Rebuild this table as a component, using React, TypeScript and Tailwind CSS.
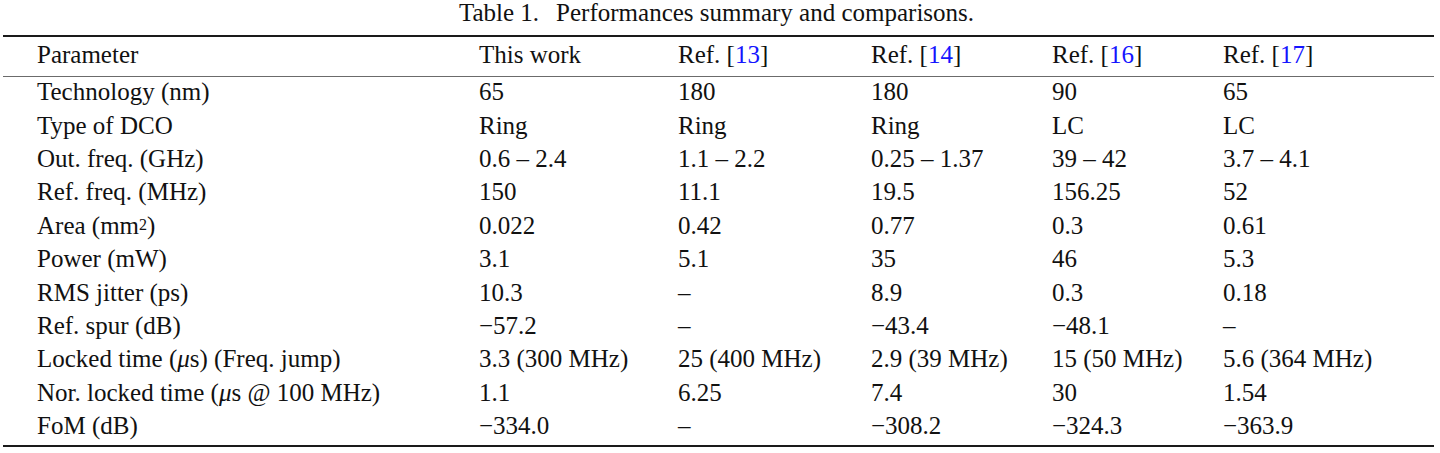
import React from "react";

type Cell = React.ReactNode;

const Ref = ({ n }: { n: number }) => (
    <span>
        Ref. [<span className="text-[#1515ff]">{n}</span>]
    </span>
);

const mu = <i>μ</i>;

// 본문 행: 첫 칸은 파라미터 이름, 나머지는 각 논문의 값
const rows: Cell[][] = [
    ["Technology (nm)", "65", "180", "180", "90", "65"],
    ["Type of DCO", "Ring", "Ring", "Ring", "LC", "LC"],
    ["Out. freq. (GHz)", "0.6 – 2.4", "1.1 – 2.2", "0.25 – 1.37", "39 – 42", "3.7 – 4.1"],
    ["Ref. freq. (MHz)", "150", "11.1", "19.5", "156.25", "52"],
    [
        <span>
            Area (mm<sup className="text-[16px] relative -top-[4px]">2</sup>)
        </span>,
        "0.022",
        "0.42",
        "0.77",
        "0.3",
        "0.61",
    ],
    ["Power (mW)", "3.1", "5.1", "35", "46", "5.3"],
    ["RMS jitter (ps)", "10.3", "–", "8.9", "0.3", "0.18"],
    ["Ref. spur (dB)", "−57.2", "–", "−43.4", "−48.1", "–"],
    [
        <span>Locked time ({mu}s) (Freq. jump)</span>,
        "3.3 (300 MHz)",
        "25 (400 MHz)",
        "2.9 (39 MHz)",
        "15 (50 MHz)",
        "5.6 (364 MHz)",
    ],
    [<span>Nor. locked time ({mu}s @ 100 MHz)</span>, "1.1", "6.25", "7.4", "30", "1.54"],
    ["FoM (dB)", "−334.0", "–", "−308.2", "−324.3", "−363.9"],
];

const header: Cell[] = ["Parameter", "This work", <Ref n={13} />, <Ref n={14} />, <Ref n={16} />, <Ref n={17} />];

const grid = "grid grid-cols-[442px_199px_193px_181px_171px_1fr] pl-[34px]";

export default function App() {
    return (
        <div className="w-[1440px] h-[453px] bg-white text-[#111] text-[25px] font-['Liberation_Serif','Times_New_Roman',serif]">
            {/* 표 제목 */}
            <div className="leading-[26px] text-center pr-[7px]">
                Table 1.<span className="ml-[17px]">Performances summary and comparisons.</span>
            </div>

            <div className="ml-[3px] w-[1431px] mt-[9px] border-t-2 border-b-2 border-[#1a1a1a]">
                {/* 헤더 */}
                <div className={`${grid} leading-[33.2px] pt-[1px] pb-[5px] border-b border-[#6b6b6b]`}>
                    {header.map((c, i) => (
                        <div key={i} className="whitespace-nowrap">
                            {c}
                        </div>
                    ))}
                </div>

                {/* 본문 */}
                <div className="-mt-[2px] pb-[2px]">
                    {rows.map((r, ri) => (
                        <div key={ri} className={`${grid} leading-[33.4px]`}>
                            {r.map((c, ci) => (
                                <div key={ci} className="whitespace-nowrap">
                                    {c}
                                </div>
                            ))}
                        </div>
                    ))}
                </div>
            </div>
        </div>
    );
}
